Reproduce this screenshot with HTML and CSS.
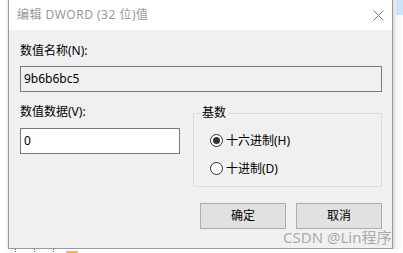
FILE: index.html
```html
<!DOCTYPE html>
<html lang="zh">
<head>
<meta charset="utf-8">
<title>编辑 DWORD (32 位)值</title>
<link rel="stylesheet" href="styles.css">
</head>
<body>
<div class="screen">
  <div class="gutter-left"></div>
  <div class="dialog">
    <div class="titlebar">
      <span class="title">编辑 DWORD (32 位)值</span>
      <svg class="close" width="11" height="11" viewBox="0 0 11 11"><path d="M0.5 0.5 L10.5 10.5 M10.5 0.5 L0.5 10.5" stroke="#808080" stroke-width="1" fill="none"/></svg>
    </div>
    <div class="body">
      <div class="label">数值名称(N):</div>
      <div class="field readonly">9b6b6bc5</div>
      <div class="row">
        <div class="col-left">
          <div class="label">数值数据(V):</div>
          <div class="field data">0</div>
        </div>
        <fieldset class="group">
          <legend>基数</legend>
          <div class="radio"><span class="circle checked"></span><span>十六进制(H)</span></div>
          <div class="radio"><span class="circle"></span><span>十进制(D)</span></div>
        </fieldset>
      </div>
      <div class="buttons">
        <div class="btn">确定</div>
        <div class="btn">取消</div>
      </div>
    </div>
  </div>
  <div class="side-right"><div class="blue"></div></div>
  <div class="bottom">
    <span class="tick t1"></span>
    <span class="tick t2"></span>
    <span class="tick t3"></span>
    <span class="folder"></span>
  </div>
  <div class="watermark">CSDN @Lin程序</div>
</div>
</body>
</html>
```
FILE: styles.css
```css
html, body {
  margin: 0;
  padding: 0;
  background: #ffffff;
}
body {
  font-family: "Noto Sans", "Noto Sans CJK SC", sans-serif;
  font-size: 12px;
  color: #000;
}
.screen {
  position: relative;
  width: 403px;
  height: 253px;
  overflow: hidden;
  display: grid;
  grid-template-columns: 8px 385px 10px;
  grid-template-rows: 249px 4px;
}
.gutter-left {
  background: linear-gradient(to right, #ffffff 0, #ffffff 5px, #ececec 8px);
}
.dialog {
  display: flex;
  flex-direction: column;
  border-left: 1px solid #9c9c9c;
  border-right: 1px solid #9c9c9c;
  border-bottom: 1px solid #9c9c9c;
  background: #f0f0f0;
}
.titlebar {
  height: 30px;
  flex: none;
  background: #ffffff;
  display: flex;
  align-items: center;
  justify-content: space-between;
  padding: 0 8px 0 8px;
}
.title {
  color: #999999;
  font-size: 12px;
  line-height: 16px;
  letter-spacing: 0.5px;
}
.close {
  display: block;
}
.body {
  flex: 1;
  padding: 13px 10px 0 11px;
}
.label {
  line-height: 16px;
  height: 16px;
}
.field {
  box-sizing: border-box;
  height: 26px;
  margin-top: 7px;
  border: 1px solid #7a7a7a;
  padding: 0 3px;
  line-height: 24px;
  background: #ffffff;
}
.field.readonly {
  background: #f0f0f0;
}
.field.data {
  margin-top: 8px;
}
.row {
  display: flex;
  gap: 13px;
  margin-top: 12px;
}
.col-left {
  width: 160px;
  flex: none;
}
.group {
  box-sizing: border-box;
  width: 190px;
  height: 83px;
  margin: 0;
  padding: 0 0 0 6px;
  border: 1px solid #dcdcdc;
  min-width: 0;
}
.group legend {
  padding: 0 2px;
  line-height: 18px;
  font-size: 12px;
}
.radio {
  display: flex;
  align-items: center;
  height: 20px;
  margin-left: 10px;
  margin-top: 8px;
  gap: 3px;
}
.circle {
  box-sizing: border-box;
  width: 13px;
  height: 13px;
  border: 1px solid #333333;
  border-radius: 50%;
  background: #ffffff;
  display: flex;
  align-items: center;
  justify-content: center;
}
.circle.checked::after {
  content: "";
  width: 7px;
  height: 7px;
  border-radius: 50%;
  background: #333333;
}
.buttons {
  display: flex;
  justify-content: flex-end;
  gap: 10px;
  margin-top: 16px;
}
.btn {
  box-sizing: border-box;
  width: 86px;
  height: 26px;
  border: 1px solid #adadad;
  background: #e1e1e1;
  text-align: center;
  line-height: 24px;
}
.side-right {
  background: linear-gradient(to right, #d8d8d8 0, #ececec 2px, #f6f6f6 4px, #ffffff 10px);
}
.blue {
  height: 15px;
  margin-left: 3px;
  background: #cce4f7;
}
.bottom {
  grid-column: 1 / -1;
  background: #ffffff;
  display: flex;
  align-items: flex-start;
}
.tick {
  width: 1px;
  height: 4px;
  background: repeating-linear-gradient(to bottom, #6d6d6d 0, #6d6d6d 1px, transparent 1px, transparent 2px);
  flex: none;
}
.t1 { margin-left: 15px; }
.t2 { margin-left: 18px; }
.t3 { margin-left: 18px; }
.folder {
  width: 12px;
  height: 2px;
  margin-left: 12px;
  margin-top: 2px;
  background: #e6bd46;
  flex: none;
}
.watermark {
  position: absolute;
  left: 283px;
  top: 228px;
  font-size: 15px;
  line-height: 18px;
  color: rgba(120, 120, 120, 0.6);
  white-space: nowrap;
}
```
